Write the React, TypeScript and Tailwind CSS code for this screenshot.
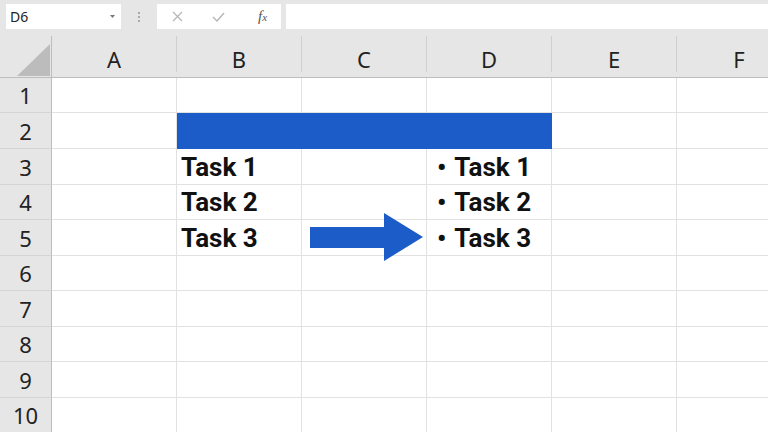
const COLS = ["A", "B", "C", "D", "E", "F"];
const ROW_HEIGHTS = [35, 36, 36, 35, 36, 35, 36, 35, 36, 35];

const taskFont = { fontFamily: "Roboto, 'Liberation Sans', sans-serif" };

function cellContent(row: number, col: string) {
  if (col === "B" && row >= 3 && row <= 5) {
    return <span className="pl-[4px] pb-[4px] text-[26px] leading-none font-bold text-[#111]">Task {row - 2}</span>;
  }
  if (col === "D" && row >= 3 && row <= 5) {
    return (
      <span className="pl-[10px] pb-[4px] text-[26px] leading-none font-bold text-[#111]">
        <span className="mr-[8px]">•</span>Task {row - 2}
      </span>
    );
  }
  return null;
}

function cellFill(row: number, col: string) {
  if (row === 2 && (col === "B" || col === "C" || col === "D")) return "bg-[#1c5cc8] border-[#1c5cc8]";
  return "bg-white border-[#e1e1e1]";
}

function FormulaBar() {
  return (
    <div className="flex h-[36px] items-start gap-0 bg-[#e6e6e6] pt-[4px]">
      <div className="ml-[6px] flex h-[25px] w-[115px] items-center justify-between bg-white pl-[4px] pr-[6px]">
        <span className="text-[14px] text-[#222]" style={{ fontFamily: "'Noto Sans', sans-serif" }}>D6</span>
        <svg width="5" height="3" viewBox="0 0 5 3"><path d="M0 0 L5 0 L2.5 3 Z" fill="#777" /></svg>
      </div>
      <div className="flex h-[25px] w-[36px] flex-col items-center justify-center gap-[2px]">
        <span className="h-[2px] w-[2px] bg-[#aaa]" />
        <span className="h-[2px] w-[2px] bg-[#aaa]" />
        <span className="h-[2px] w-[2px] bg-[#aaa]" />
      </div>
      <div className="flex h-[25px] w-[124px] items-center bg-white">
        <svg className="ml-[15px]" width="11" height="11" viewBox="0 0 11 11">
          <path d="M1 1 L10 10 M10 1 L1 10" stroke="#b5b5b5" strokeWidth="1.2" />
        </svg>
        <svg className="ml-[29px]" width="13" height="10" viewBox="0 0 13 10">
          <path d="M1 5 L5 9 L12 1" stroke="#b5b5b5" strokeWidth="1.4" fill="none" />
        </svg>
        <span
          className="ml-[33px] text-[15px] italic text-[#555]"
          style={{ fontFamily: "'Liberation Serif', serif" }}
        >
          f<span className="text-[11px]">x</span>
        </span>
      </div>
      <div className="ml-[5px] h-[25px] flex-1 bg-white" />
    </div>
  );
}

export default function App() {
  return (
    <div className="relative h-[432px] w-[768px] overflow-hidden bg-white" style={taskFont}>
      <FormulaBar />

      <div className="flex h-[42px] border-b border-[#bdbdbd] bg-[#e6e6e6]">
        <div className="relative w-[52px] shrink-0 border-r border-[#bdbdbd]">
          <svg className="absolute left-[17px] top-[8px]" width="33" height="32" viewBox="0 0 33 32">
            <path d="M33 0 L33 32 L0 32 Z" fill="#bcbcbc" />
          </svg>
        </div>
        {COLS.map((c) => (
          <div key={c} className="flex w-[125px] shrink-0 items-end justify-center pb-[5px]">
            <div className="flex h-full w-full items-end justify-center border-r border-[#cfcfcf] pb-0" style={{ marginTop: 4 }}>
              <span className="text-[22px] leading-none text-[#222]" style={{ fontFamily: "'Noto Sans', sans-serif", paddingBottom: 2 }}>
                {c}
              </span>
            </div>
          </div>
        ))}
      </div>

      {ROW_HEIGHTS.map((h, i) => {
        const row = i + 1;
        return (
          <div key={row} className="flex" style={{ height: h }}>
            <div className="flex w-[52px] shrink-0 items-center justify-center border-r border-b border-r-[#bdbdbd] border-b-[#d4d4d4] bg-[#e6e6e6]">
              <span className="text-[22px] leading-none text-[#222]" style={{ fontFamily: "'Noto Sans', sans-serif" }}>
                {row}
              </span>
            </div>
            {COLS.map((c) => (
              <div
                key={c}
                className={`flex w-[125px] shrink-0 items-end whitespace-nowrap border-r border-b ${cellFill(row, c)}`}
              >
                {cellContent(row, c)}
              </div>
            ))}
          </div>
        );
      })}

      <svg className="absolute left-[310px] top-[213px]" width="114" height="49" viewBox="0 0 114 49">
        <path d="M0 14 L74 14 L74 0 L113 24 L74 48 L74 35 L0 35 Z" fill="#1c5cc8" />
      </svg>
    </div>
  );
}
